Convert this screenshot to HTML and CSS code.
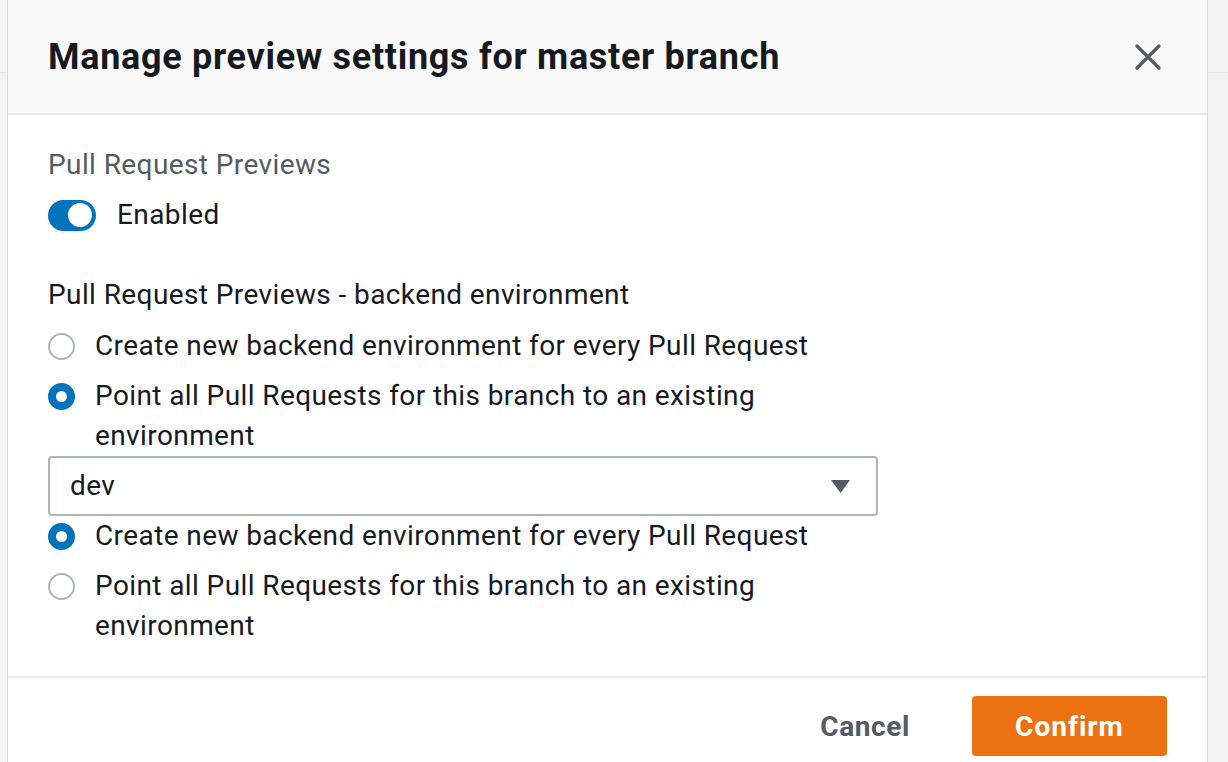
FILE: index.html
```html
<!DOCTYPE html>
<html lang="en">
<head>
<meta charset="utf-8">
<title>Manage preview settings</title>
<link rel="stylesheet" href="styles.css">
</head>
<body>
<div class="page">
  <div class="strip strip-left"></div>
  <div class="modal">
    <div class="modal-header">
      <h2 class="modal-title">Manage preview settings for master branch</h2>
      <button class="close" aria-label="Close">
        <svg width="26" height="26" viewBox="0 0 26 26"><path d="M2 2 L24 24 M24 2 L2 24" stroke="#545b64" stroke-width="3.2" stroke-linecap="round" fill="none"/></svg>
      </button>
    </div>
    <div class="modal-body">
      <div class="label muted">Pull Request Previews</div>
      <div class="toggle-row">
        <span class="toggle"><span class="knob"></span></span>
        <span class="toggle-text">Enabled</span>
      </div>
      <div class="label group-label">Pull Request Previews - backend environment</div>
      <div class="radios">
        <label class="radio"><span class="dot"></span><span class="radio-text">Create new backend environment for every Pull Request</span></label>
        <label class="radio"><span class="dot on"></span><span class="radio-text">Point all Pull Requests for this branch to an existing<br>environment</span></label>
      </div>
      <div class="select">
        <span class="select-value">dev</span>
        <svg class="caret" width="19" height="13" viewBox="0 0 19 13"><path d="M0 0 H19 L9.5 13 Z" fill="#545b64"/></svg>
      </div>
      <div class="radios radios-after">
        <label class="radio"><span class="dot on"></span><span class="radio-text">Create new backend environment for every Pull Request</span></label>
        <label class="radio"><span class="dot"></span><span class="radio-text">Point all Pull Requests for this branch to an existing<br>environment</span></label>
      </div>
    </div>
    <div class="modal-footer">
      <button class="btn-link">Cancel</button>
      <button class="btn-primary">Confirm</button>
    </div>
  </div>
  <div class="strip strip-right"></div>
</div>
</body>
</html>
```
FILE: styles.css
```css
* { box-sizing: border-box; }
html, body { margin: 0; padding: 0; }
body {
  width: 1228px;
  height: 762px;
  overflow: hidden;
  background: #f2f3f3;
  font-family: Roboto, "Liberation Sans", sans-serif;
  color: #16191f;
  letter-spacing: 0.4px;
}
.page {
  display: flex;
  height: 762px;
}
.strip {
  flex: none;
  background: #f2f3f3;
}
.strip::after {
  content: "";
  display: block;
  margin-top: 72px;
  height: 1px;
  background: #e3e6e6;
}
.strip-left { width: 7px; }
.strip-right { width: 20px; }
.modal {
  flex: none;
  width: 1201px;
  background: #fff;
  border-left: 1px solid #d5dbdb;
  border-right: 1px solid #d5dbdb;
  display: flex;
  flex-direction: column;
}
.modal-header {
  height: 115px;
  background: #fafafa;
  border-bottom: 2px solid #eaeded;
  display: flex;
  align-items: center;
  justify-content: space-between;
  padding: 0 46px 0 40px;
}
.modal-title {
  margin: 0;
  font-size: 36px;
  font-weight: 700;
  line-height: 44px;
  letter-spacing: 0.7px;
  color: #16191f;
}
.close {
  border: 0;
  background: none;
  padding: 0;
  display: flex;
}
.modal-body {
  padding: 30px 40px 30px 40px;
  border-bottom: 2px solid #eaeded;
}
.label {
  font-size: 28px;
  line-height: 40px;
}
.muted { color: #545b64; }
.toggle-row {
  display: flex;
  align-items: center;
  height: 40px;
  margin-top: 10px;
  gap: 21px;
}
.toggle {
  width: 48px;
  height: 31px;
  border-radius: 16px;
  background: #0073bb;
  display: flex;
  align-items: center;
  justify-content: flex-end;
  padding-right: 4px;
}
.knob {
  width: 24px;
  height: 24px;
  border-radius: 50%;
  background: #fff;
}
.toggle-text {
  font-size: 28px;
  line-height: 40px;
}
.group-label { margin-top: 40px; }
.radios {
  display: flex;
  flex-direction: column;
  gap: 10px;
  margin-top: 11px;
}
.radios-after { margin-top: 0; }
.radio {
  display: flex;
  align-items: flex-start;
  gap: 20px;
}
.dot {
  flex: none;
  width: 27px;
  height: 27px;
  margin-top: 7px;
  border-radius: 50%;
  border: 2px solid #aab7b8;
  background: #fff;
}
.dot.on {
  border: 8px solid #0073bb;
}
.radio-text {
  font-size: 28px;
  line-height: 40px;
}
.select {
  width: 830px;
  height: 60px;
  border: 2px solid #aab7b8;
  border-radius: 4px;
  display: flex;
  align-items: center;
  justify-content: space-between;
  padding: 0 26px 0 20px;
}
.select-value {
  font-size: 28px;
  line-height: 40px;
}
.modal-footer {
  display: flex;
  justify-content: flex-end;
  align-items: center;
  gap: 62px;
  padding: 18px 40px 0 40px;
}
.btn-link {
  border: 0;
  background: none;
  font-family: inherit;
  font-size: 28px;
  font-weight: 700;
  letter-spacing: 0.6px;
  color: #545b64;
  padding: 0;
}
.btn-primary {
  width: 195px;
  height: 60px;
  border: 0;
  border-radius: 4px;
  background: #ec7211;
  color: #fff;
  font-family: inherit;
  font-size: 28px;
  font-weight: 700;
  letter-spacing: 1px;
}
```
